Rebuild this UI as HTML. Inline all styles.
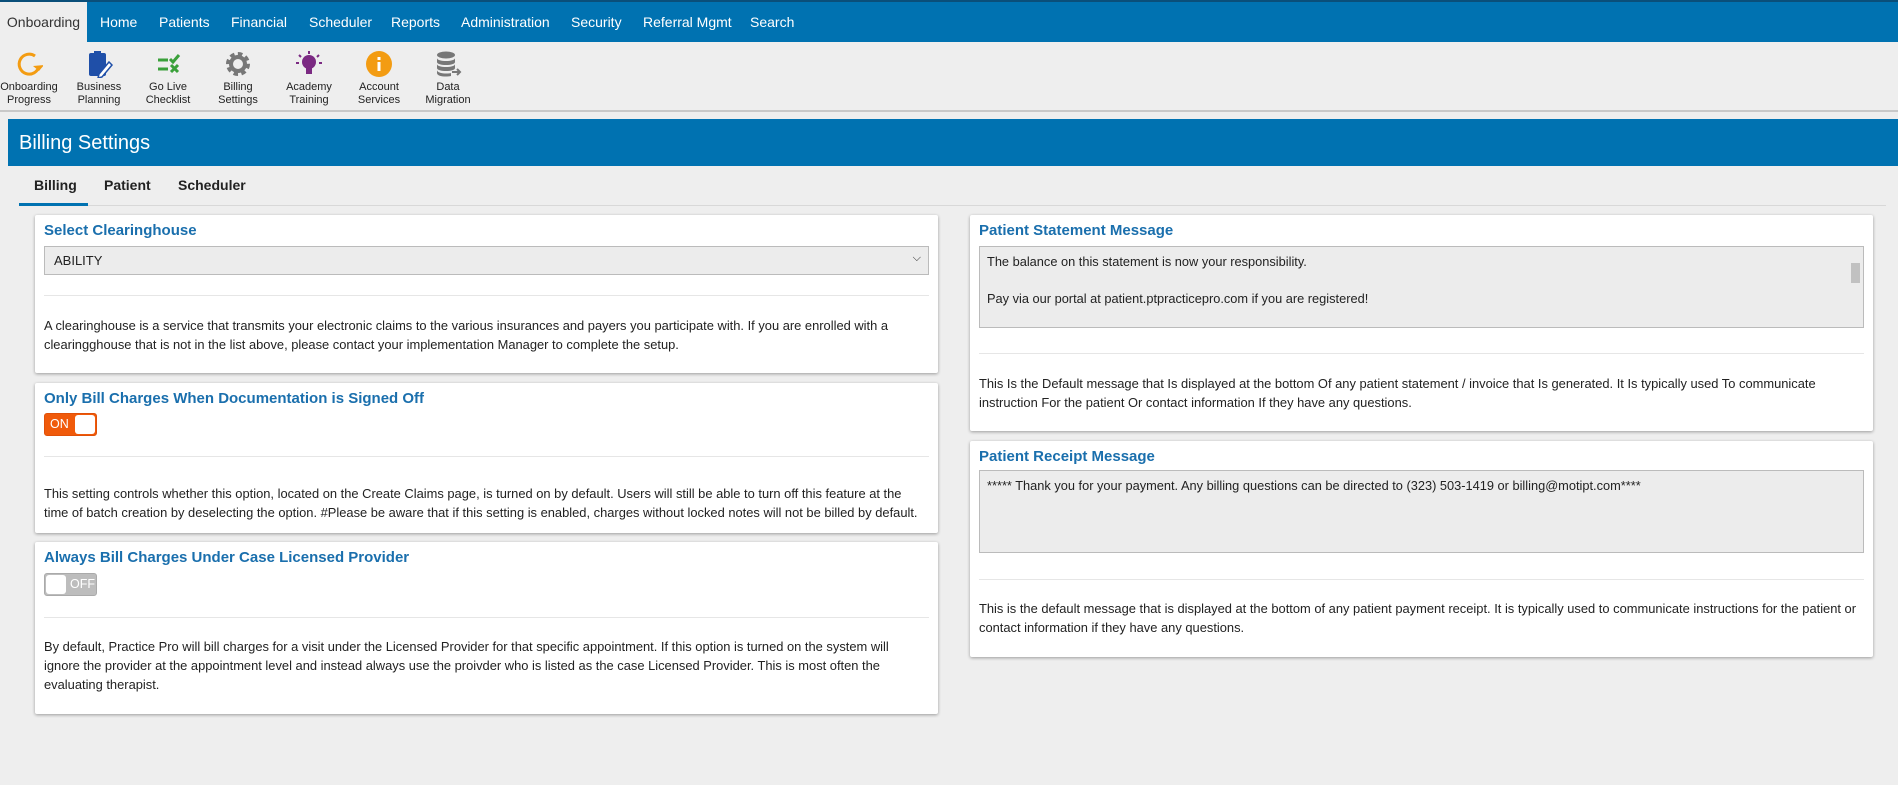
<!DOCTYPE html>
<html><head><meta charset="utf-8"><style>
*{box-sizing:border-box;margin:0;padding:0}
body{width:1898px;height:785px;background:#eeeeee;font-family:"Liberation Sans",Arial,sans-serif;position:relative;overflow:hidden;color:#222}
.nav{position:absolute;left:0;top:0;width:1898px;height:42px;background:#0072b1;border-top:2px solid #0a4f7a}
.nav span{position:absolute;top:12px;color:#fff;font-size:14px}
.nav .act{left:0;top:0;width:87px;height:40px;background:#eeeeee;color:#333;text-align:center;line-height:40px}
.tb{position:absolute;left:0;top:42px;width:1898px;height:70px;border-bottom:2px solid #c8c8c8;background:#eeeeee}
.ic{position:absolute;top:8px;width:70px;margin-left:-35px;text-align:center;font-size:11px;line-height:13px;color:#222}
.ic svg{display:block;margin:0 auto 3px}
.hdr{position:absolute;left:8px;top:119px;width:1890px;height:47px;background:#0072b1;color:#fff;font-size:20px;padding:13px 0 0 11px}
.tabs span{position:absolute;top:177px;font-size:14px;font-weight:bold;color:#222}
.card{position:absolute;background:#fff;border-radius:2px;box-shadow:0 1px 3px rgba(0,0,0,.35)}
.card h3{position:absolute;left:9px;top:7px;font-size:15px;color:#1a6fad;font-weight:bold}
.card hr{position:absolute;left:9px;right:9px;border:0;border-top:1px solid #e6e6e6}
.card p{position:absolute;left:9px;right:9px;font-size:12.9px;line-height:19px;color:#222;white-space:nowrap}
.sel{position:absolute;left:9px;right:9px;top:31px;height:29px;background:#ececec;border:1px solid #bbb;font-size:13px;padding:6px 9px}
.ta{position:absolute;left:9px;right:9px;background:#ececec;border:1px solid #bbb;font-size:12.8px;padding:6px 7px;line-height:18.5px}
.tog{position:absolute;left:9px;width:53px;height:23px;border-radius:3px;font-size:12.5px;color:#fff}
</style></head><body>
<div class="nav">
<span class="act">Onboarding</span>
<span style="left:100px">Home</span><span style="left:159px">Patients</span><span style="left:231px">Financial</span><span style="left:309px">Scheduler</span><span style="left:391px">Reports</span><span style="left:461px">Administration</span><span style="left:571px">Security</span><span style="left:643px">Referral Mgmt</span><span style="left:750px">Search</span>
</div>
<div class="tb">
<div class="ic" style="left:29px"><svg width="28" height="28" viewBox="0 0 28 28"><path d="M20 6A10 10 0 1 0 24 16" fill="none" stroke="#f39c12" stroke-width="3"/><path d="M18 16l6 5 5-6z" fill="#f39c12"/></svg>Onboarding<br>Progress</div>
<div class="ic" style="left:99px"><svg width="28" height="28" viewBox="0 0 28 28"><rect x="4" y="3" width="17" height="23" rx="2" fill="#1f4fa8"/><rect x="9" y="1" width="7" height="4" fill="#1f4fa8"/><path d="M14 24l10-12 3 3-10 12-4 1z" fill="#fff" stroke="#1f4fa8" stroke-width="1.5"/></svg>Business<br>Planning</div>
<div class="ic" style="left:168px"><svg width="28" height="28" viewBox="0 0 28 28"><path d="M4 10h10M4 19h10" stroke="#3aa03a" stroke-width="3"/><path d="M16 9l3 3 6-7M17 15l7 7M24 15l-7 7" stroke="#3aa03a" stroke-width="3" fill="none"/></svg>Go Live<br>Checklist</div>
<div class="ic" style="left:238px"><svg width="28" height="28" viewBox="0 0 28 28"><circle cx="14" cy="14" r="9" fill="none" stroke="#777" stroke-width="6" stroke-dasharray="4 3"/><circle cx="14" cy="14" r="7" fill="none" stroke="#777" stroke-width="4"/></svg>Billing<br>Settings</div>
<div class="ic" style="left:309px"><svg width="28" height="28" viewBox="0 0 28 28"><circle cx="14" cy="12" r="7" fill="#7b2a82"/><rect x="11" y="18" width="6" height="6" fill="#7b2a82"/><path d="M14 1v3M4 5l2 2M24 5l-2 2M1 13h3M24 13h3" stroke="#7b2a82" stroke-width="2"/></svg>Academy<br>Training</div>
<div class="ic" style="left:379px"><svg width="28" height="28" viewBox="0 0 28 28"><circle cx="14" cy="14" r="13" fill="#f39c12"/><rect x="12.5" y="12" width="3" height="9" fill="#fff"/><rect x="12.5" y="7" width="3" height="3" fill="#fff"/></svg>Account<br>Services</div>
<div class="ic" style="left:448px"><svg width="28" height="28" viewBox="0 0 28 28"><ellipse cx="12" cy="5" rx="9" ry="3.5" fill="#777"/><path d="M3 8c0 4 18 4 18 0v4c0 4-18 4-18 0zM3 14c0 4 18 4 18 0v4c0 4-18 4-18 0zM3 20c0 4 12 4 14 3v3c-4 1-14 1-14-3z" fill="#777"/><path d="M18 22h8M23 19l3 3-3 3" stroke="#777" stroke-width="2" fill="none"/></svg>Data<br>Migration</div>
</div>
<div class="hdr">Billing Settings</div>
<div class="tabs"><span style="left:34px">Billing</span><span style="left:104px">Patient</span><span style="left:178px">Scheduler</span></div>
<div style="position:absolute;left:19px;top:205px;width:1867px;height:1px;background:#d8d8d8"></div>
<div style="position:absolute;left:19px;top:203px;width:69px;height:3px;background:#0072b1"></div>

<div class="card" style="left:35px;top:215px;width:903px;height:158px">
<h3>Select Clearinghouse</h3>
<div class="sel">ABILITY<span style="position:absolute;right:7px;top:5px;font-size:11px">&#x2335;</span></div>
<hr style="top:80px">
<p style="top:101px">A clearinghouse is a service that transmits your electronic claims to the various insurances and payers you participate with. If you are enrolled with a<br>clearingghouse that is not in the list above, please contact your implementation Manager to complete the setup.</p>
</div>
<div class="card" style="left:35px;top:383px;width:903px;height:150px">
<h3>Only Bill Charges When Documentation is Signed Off</h3>
<div class="tog" style="top:30px;background:#f05a0a;border:1px solid #e05008"><span style="position:absolute;left:5px;top:3px">ON</span><span style="position:absolute;right:1px;top:1px;width:20px;height:19px;background:#fff;border-radius:3px"></span></div>
<hr style="top:73px">
<p style="top:101px">This setting controls whether this option, located on the Create Claims page, is turned on by default. Users will still be able to turn off this feature at the<br>time of batch creation by deselecting the option. #Please be aware that if this setting is enabled, charges without locked notes will not be billed by default.</p>
</div>
<div class="card" style="left:35px;top:542px;width:903px;height:172px">
<h3>Always Bill Charges Under Case Licensed Provider</h3>
<div class="tog" style="top:31px;background:#bdbdbd;border:1px solid #aaa"><span style="position:absolute;left:1px;top:1px;width:20px;height:19px;background:#fff;border-radius:3px"></span><span style="position:absolute;left:25px;top:3px">OFF</span></div>
<hr style="top:75px">
<p style="top:95px">By default, Practice Pro will bill charges for a visit under the Licensed Provider for that specific appointment. If this option is turned on the system will<br>ignore the provider at the appointment level and instead always use the proivder who is listed as the case Licensed Provider. This is most often the<br>evaluating therapist.</p>
</div>

<div class="card" style="left:970px;top:215px;width:903px;height:216px">
<h3>Patient Statement Message</h3>
<div class="ta" style="top:31px;height:82px;padding-right:30px">The balance on this statement is now your responsibility.<br><br>Pay via our portal at patient.ptpracticepro.com if you are registered!
<div style="position:absolute;right:0;top:0;width:15px;height:80px;background:#ececec"><div style="position:absolute;left:3px;top:16px;width:9px;height:20px;background:#c1c1c1"></div></div></div>
<hr style="top:138px">
<p style="top:159px">This Is the Default message that Is displayed at the bottom Of any patient statement / invoice that Is generated. It Is typically used To communicate<br>instruction For the patient Or contact information If they have any questions.</p>
</div>
<div class="card" style="left:970px;top:441px;width:903px;height:216px">
<h3>Patient Receipt Message</h3>
<div class="ta" style="top:29px;height:83px">***** Thank you for your payment. Any billing questions can be directed to (323) 503-1419 or billing@motipt.com****</div>
<hr style="top:138px">
<p style="top:158px">This is the default message that is displayed at the bottom of any patient payment receipt. It is typically used to communicate instructions for the patient or<br>contact information if they have any questions.</p>
</div>
</body></html>
